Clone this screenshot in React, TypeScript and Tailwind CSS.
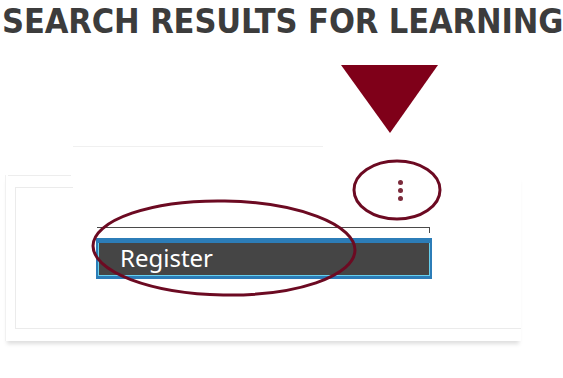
import React from "react";

function Annotations() {
  // red marker drawings on top of the screenshot
  return (
    <svg
      className="absolute inset-0 pointer-events-none"
      width="563"
      height="378"
      viewBox="0 0 563 378"
      fill="none"
    >
      <polygon points="341,65 438,65 390,133" fill="#7f0019" />
      <ellipse cx="397" cy="190" rx="43" ry="29" stroke="#6c0a22" strokeWidth="3" />
      <ellipse
        cx="224"
        cy="248"
        rx="131"
        ry="47"
        stroke="#6c0a22"
        strokeWidth="3"
        transform="rotate(1 224 248)"
      />
    </svg>
  );
}

export default function App() {
  return (
    <div className="relative w-[563px] h-[378px] overflow-hidden bg-white">
      <h1 className="pl-[2px] pt-[2px] text-[34px] leading-[39px] font-bold text-[#3c3c3c] tracking-[-0.1px] whitespace-nowrap [font-family:'DejaVu_Sans_Condensed','Liberation_Sans',sans-serif]">
        SEARCH RESULTS FOR LEARNING
      </h1>

      {/* result card */}
      <div className="relative mt-[134px] ml-[5px] w-[516px] h-[166px] border-l border-[#f1f1f1] shadow-[0_5px_4px_-2px_rgba(0,0,0,0.13)]">
        <div className="ml-[2px] w-[63px] border-t border-[#ededed]" />
        <div className="ml-[9px] mt-[11px] w-[60px] border-t border-[#ebebeb]" />
        <div className="ml-[9px] h-[141px] border-l border-b border-[#ebebeb]" />

        {/* dropdown menu */}
        <div className="absolute left-[67px] top-[-29px] w-[368px] h-[156px] bg-white">
          <div className="w-[250px] border-t border-[#f0f0f0]" />
          <div className="flex justify-end pr-[37px] pt-[33px]">
            <button className="flex flex-col items-center gap-[3px] w-[8px]">
              <span className="w-[5px] h-[5px] rounded-full bg-[#7b2b3b]" />
              <span className="w-[5px] h-[5px] rounded-full bg-[#7b2b3b]" />
              <span className="w-[5px] h-[5px] rounded-full bg-[#7b2b3b]" />
            </button>
          </div>
          <div className="ml-[24px] mr-[11px] mt-[26px] h-[6px] border-t border-r border-[#4a4a4a]" />
          <div className="ml-[23px] mr-[9px] mt-[5px] border-t-[5px] border-x-[2px] border-b-[3px] border-[#2c7db8]">
            <div className="h-[33px] bg-[#454545] border border-[#66d0ee] border-t-0 flex items-center pl-[21px]">
              <span className="text-[24px] text-white leading-none pb-[2px] [font-family:'Noto_Sans','Open_Sans',sans-serif]">
                Register
              </span>
            </div>
          </div>
        </div>
      </div>

      <Annotations />
    </div>
  );
}
